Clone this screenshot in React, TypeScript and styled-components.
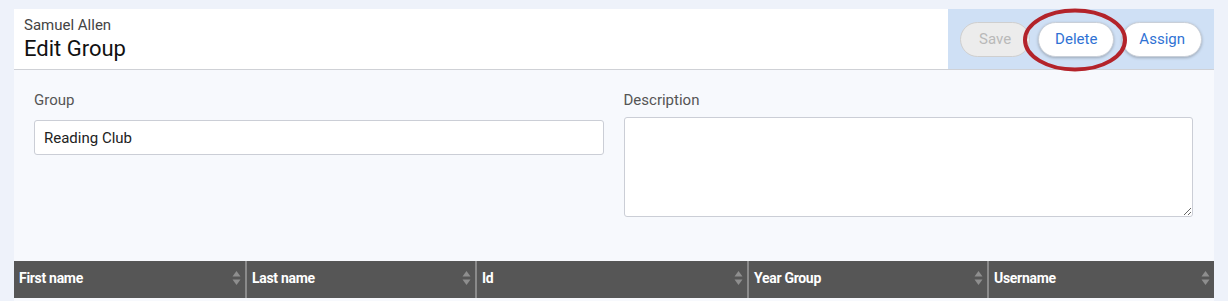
import React from "react";
import styled, { createGlobalStyle } from "styled-components";

const Global = createGlobalStyle`
  html, body { margin: 0; padding: 0; background: #eef2fa; }
  body { font-family: Roboto, "Liberation Sans", Arial, sans-serif; }
  * { box-sizing: border-box; }
`;

const Page = styled.div`
  padding: 9px 14px 0 14px;
  height: 301px;
  overflow: hidden;
`;

const Card = styled.div`
  background: #f7f9fd;
  min-height: 300px;
`;

const Header = styled.div`
  display: flex;
  height: 61px;
  border-bottom: 1px solid #cfd1d6;
`;

const TitleBlock = styled.div`
  flex: 1;
  background: #ffffff;
  padding: 7px 10px 0 10px;
  display: flex;
  flex-direction: column;
`;

const Subtitle = styled.div`
  font-size: 15px;
  color: #444;
  line-height: 18px;
`;

const Title = styled.div`
  font-size: 22px;
  color: #111;
  line-height: 26px;
  margin-top: 2px;
`;

const Actions = styled.div`
  width: 266px;
  background: #cfe0f5;
  display: flex;
  align-items: center;
  gap: 8px;
  padding: 0 13px 0 12px;
  position: relative;
`;

const PillButton = styled.button<{ $disabled?: boolean }>`
  height: 35px;
  border-radius: 18px;
  padding: 0 ${(p) => (p.$disabled ? 18 : 16)}px;
  font-family: Roboto, "Liberation Sans", Arial, sans-serif;
  font-size: 15px;
  border: 1px solid ${(p) => (p.$disabled ? "#cfcfcf" : "#c9cfd8")};
  background: ${(p) => (p.$disabled ? "#ececec" : "#ffffff")};
  color: ${(p) => (p.$disabled ? "#b9b9b9" : "#2f72d4")};
  box-shadow: ${(p) => (p.$disabled ? "none" : "0 1px 3px rgba(0,0,0,0.25)")};
  cursor: pointer;
`;

const Highlight = styled.svg`
  position: absolute;
  left: 74px;
  top: -2px;
  pointer-events: none;
`;

const Form = styled.div`
  display: grid;
  grid-template-columns: 1fr 1fr;
  gap: 20px;
  padding: 22px 21px 0 20px;
  height: 191px;
`;

const Field = styled.div<{ $gap: number }>`
  display: flex;
  flex-direction: column;
  gap: ${(p) => p.$gap}px;
`;

const Label = styled.label`
  font-size: 15px;
  color: #555;
  line-height: 16px;
`;

const Input = styled.input`
  height: 35px;
  border: 1px solid #cbced6;
  border-radius: 3px;
  background: #fff;
  padding: 0 9px;
  font-family: Roboto, "Liberation Sans", Arial, sans-serif;
  font-size: 15px;
  color: #222;
  outline: none;
`;

const TextArea = styled.textarea`
  height: 100px;
  border: 1px solid #cbced6;
  border-radius: 3px;
  background: #fff;
  padding: 8px 10px;
  font-family: Roboto, "Liberation Sans", Arial, sans-serif;
  font-size: 15px;
  outline: none;
  resize: vertical;
`;

const TableHead = styled.div`
  display: grid;
  grid-template-columns: 233px 230px 272px 240px 1fr;
  height: 37px;
  background: #565656;
`;

const HeadCell = styled.div<{ $last?: boolean }>`
  display: flex;
  align-items: center;
  justify-content: space-between;
  padding: 0 4px 3px 5px;
  border-right: ${(p) => (p.$last ? "none" : "2px solid #8a8a8a")};
  color: #fff;
  font-weight: 700;
  font-size: 14px;
  letter-spacing: -0.3px;
`;

const SortIcon = () => (
  <svg width="9" height="16" viewBox="0 0 9 16">
    <path d="M4.5 1 L8.5 6.5 L0.5 6.5 Z" fill="#8e8e8e" />
    <path d="M4.5 15 L8.5 9.5 L0.5 9.5 Z" fill="#8e8e8e" />
  </svg>
);

const columns = ["First name", "Last name", "Id", "Year Group", "Username"];

export default function App() {
  return (
    <>
      <Global />
      <Page>
        <Card>
          <Header>
            <TitleBlock>
              <Subtitle>Samuel Allen</Subtitle>
              <Title>Edit Group</Title>
            </TitleBlock>
            <Actions>
              <PillButton $disabled>Save</PillButton>
              <PillButton>Delete</PillButton>
              <PillButton>Assign</PillButton>
              <Highlight width="106" height="66" viewBox="0 0 106 66">
                <ellipse cx="53" cy="33" rx="50" ry="29.5" fill="none" stroke="#b3232a" strokeWidth="4" />
              </Highlight>
            </Actions>
          </Header>
          <Form>
            <Field $gap={12}>
              <Label>Group</Label>
              <Input defaultValue="Reading Club" />
            </Field>
            <Field $gap={9}>
              <Label>Description</Label>
              <TextArea />
            </Field>
          </Form>
          <TableHead>
            {columns.map((c, i) => (
              <HeadCell key={c} $last={i === columns.length - 1}>
                <span>{c}</span>
                <SortIcon />
              </HeadCell>
            ))}
          </TableHead>
        </Card>
      </Page>
    </>
  );
}
